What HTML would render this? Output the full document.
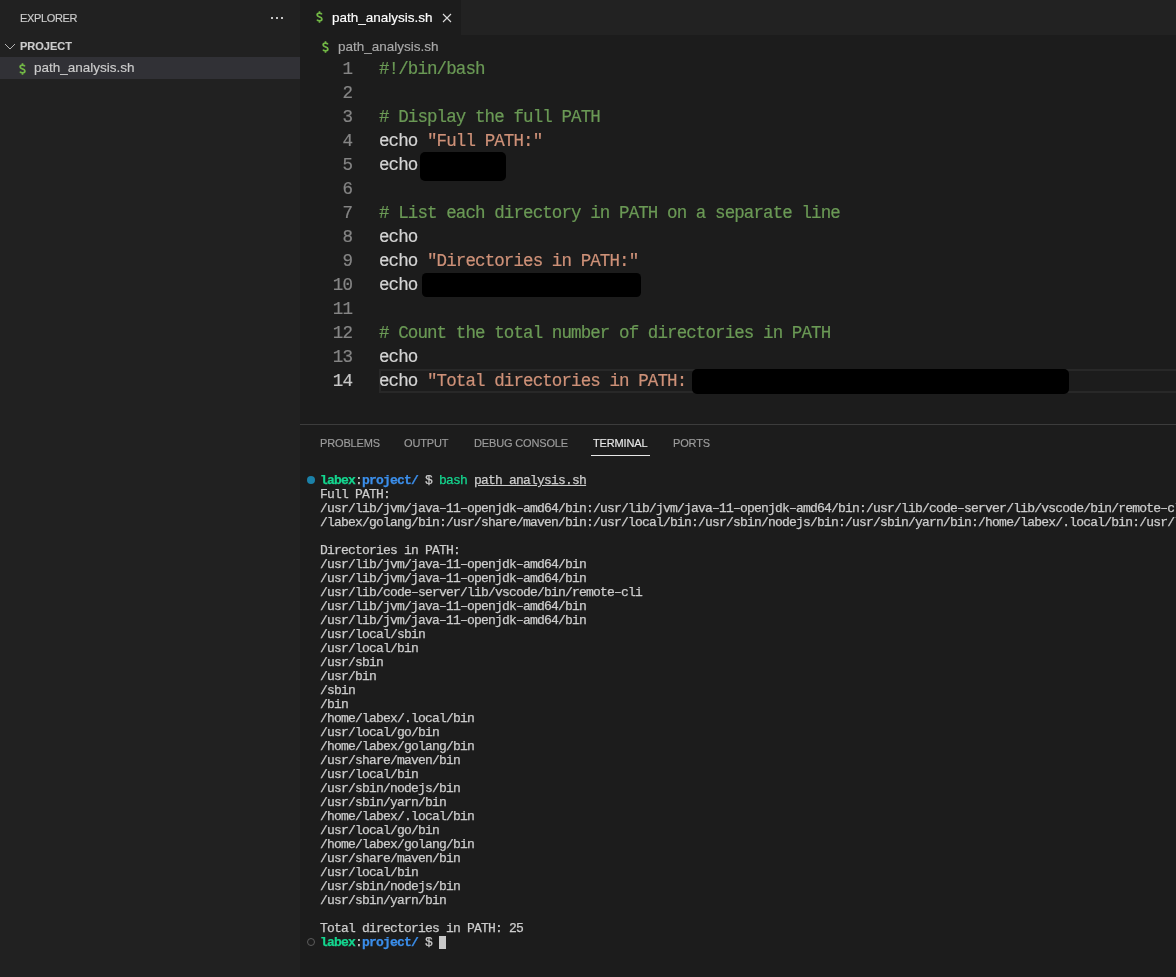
<!DOCTYPE html>
<html><head><meta charset="utf-8">
<style>
*{margin:0;padding:0;box-sizing:border-box}
html,body{width:1176px;height:977px;overflow:hidden;background:#1c1c1c}
body{position:relative;font-family:"Liberation Sans",sans-serif;-webkit-font-smoothing:antialiased;-webkit-text-stroke:0.15px currentColor}
#side,#editor{will-change:transform}
.abs{position:absolute}
#side{left:0;top:0;width:300px;height:977px;background:#212121}
#side .t{position:absolute;white-space:nowrap}
#editor{left:300px;top:0;width:876px;height:977px;background:#1c1c1c;overflow:hidden}
#tabs{left:0;top:0;width:876px;height:35px;background:#222222}
#tab{left:0;top:0;width:161px;height:35px;background:#1c1c1c}
.mono{font-family:"Liberation Mono",monospace}
.code{-webkit-text-stroke:0.2px currentColor;position:absolute;margin-top:-1px;left:79px;font-size:17.5px;letter-spacing:-0.9px;white-space:pre;line-height:24px;color:#d4d4d4}
.ln{-webkit-text-stroke:0.2px currentColor;position:absolute;margin-top:-1px;left:0;width:52px;text-align:right;font-size:17.5px;letter-spacing:-0.9px;line-height:24px;color:#858585}
.cm{color:#6a9955}
.st{color:#ce9178}
.red{position:absolute;background:#000;border-radius:5px}
#panel{left:0;top:424px;width:876px;height:553px;border-top:1px solid #3c3c3c;background:#1c1c1c}
.ptab{position:absolute;top:12px;font-size:11px;letter-spacing:-0.15px;color:#9d9d9d;white-space:nowrap}
.term{-webkit-text-stroke:0.25px currentColor;position:absolute;left:20px;top:49px;font-size:13px;letter-spacing:-0.8px;line-height:14px;color:#cccccc;white-space:pre}
.g{color:#14d68f}
.b{color:#3b8eea}
</style></head><body>
<div id="side" class="abs">
  <div class="t" style="left:20px;top:12px;font-size:11px;letter-spacing:-0.35px;color:#cccccc">EXPLORER</div>
  <div class="abs" style="left:271px;top:17px;width:2px;height:2px;background:#c5c5c5"></div>
  <div class="abs" style="left:276px;top:17px;width:2px;height:2px;background:#c5c5c5"></div>
  <div class="abs" style="left:281px;top:17px;width:2px;height:2px;background:#c5c5c5"></div>
  <svg class="abs" style="left:4px;top:43px" width="12" height="7" viewBox="0 0 12 7"><path d="M1 1 L6 6 L11 1" fill="none" stroke="#b4b4b4" stroke-width="1"/></svg>
  <div class="t" style="left:20px;top:40px;font-size:11px;font-weight:bold;color:#cccccc">PROJECT</div>
  <div class="abs" style="left:0;top:57px;width:300px;height:22px;background:#313136"></div>
  <svg class="abs" style="left:18.6px;top:62.5px" width="7" height="12" viewBox="0 0 7 12"><path d="M3.5 0.2V2.2M3.5 9.8V11.8M5.9 3.4C5.5 2.6 4.6 2.2 3.5 2.2C2.1 2.2 1.1 2.9 1.1 3.9C1.1 5.1 2.3 5.5 3.5 5.9C4.8 6.3 5.9 6.8 5.9 8C5.9 9.2 4.8 9.8 3.5 9.8C2.3 9.8 1.4 9.4 1 8.6" fill="none" stroke="#72b845" stroke-width="1.7"/></svg>
  <div class="t" style="left:34px;top:60px;font-size:13.5px;color:#cccccc">path_analysis.sh</div>
</div>
<div id="editor" class="abs">
  <div id="tabs" class="abs">
    <div id="tab" class="abs">
      <svg class="abs" style="left:16px;top:11px" width="7" height="12" viewBox="0 0 7 12"><path d="M3.5 0.2V2.2M3.5 9.8V11.8M5.9 3.4C5.5 2.6 4.6 2.2 3.5 2.2C2.1 2.2 1.1 2.9 1.1 3.9C1.1 5.1 2.3 5.5 3.5 5.9C4.8 6.3 5.9 6.8 5.9 8C5.9 9.2 4.8 9.8 3.5 9.8C2.3 9.8 1.4 9.4 1 8.6" fill="none" stroke="#72b845" stroke-width="1.7"/></svg>
      <div class="abs" style="left:32px;top:10px;font-size:13.5px;color:#ffffff;white-space:nowrap">path_analysis.sh</div>
      <svg class="abs" style="left:142px;top:13px" width="10" height="10" viewBox="0 0 10 10"><path d="M1 1 L9 9 M9 1 L1 9" stroke="#dcdcdc" stroke-width="1.1"/></svg>
    </div>
  </div>
  <svg class="abs" style="left:22px;top:40.5px" width="7" height="12" viewBox="0 0 7 12"><path d="M3.5 0.2V2.2M3.5 9.8V11.8M5.9 3.4C5.5 2.6 4.6 2.2 3.5 2.2C2.1 2.2 1.1 2.9 1.1 3.9C1.1 5.1 2.3 5.5 3.5 5.9C4.8 6.3 5.9 6.8 5.9 8C5.9 9.2 4.8 9.8 3.5 9.8C2.3 9.8 1.4 9.4 1 8.6" fill="none" stroke="#72b845" stroke-width="1.7"/></svg>
  <div class="abs" style="left:38px;top:39px;font-size:13.5px;color:#a9a9a9;white-space:nowrap">path_analysis.sh</div>

  <div class="abs mono" style="left:0;top:58px;width:876px;height:340px">
    <div class="ln" style="top:0">1</div>
    <div class="ln" style="top:24px">2</div>
    <div class="ln" style="top:48px">3</div>
    <div class="ln" style="top:72px">4</div>
    <div class="ln" style="top:96px">5</div>
    <div class="ln" style="top:120px">6</div>
    <div class="ln" style="top:144px">7</div>
    <div class="ln" style="top:168px">8</div>
    <div class="ln" style="top:192px">9</div>
    <div class="ln" style="top:216px">10</div>
    <div class="ln" style="top:240px">11</div>
    <div class="ln" style="top:264px">12</div>
    <div class="ln" style="top:288px">13</div>
    <div class="ln" style="top:312px;color:#c6c6c6">14</div>
    <div class="abs" style="left:79px;top:311px;width:805px;height:24px;border:2px solid #282828;border-right:none"></div>
    <div class="code" style="top:0"><span class="cm">#!/bin/bash</span></div>
    <div class="code" style="top:48px"><span class="cm"># Display the full PATH</span></div>
    <div class="code" style="top:72px">echo <span class="st">"Full PATH:"</span></div>
    <div class="code" style="top:96px">echo</div>
    <div class="code" style="top:144px"><span class="cm"># List each directory in PATH on a separate line</span></div>
    <div class="code" style="top:168px">echo</div>
    <div class="code" style="top:192px">echo <span class="st">"Directories in PATH:"</span></div>
    <div class="code" style="top:216px">echo</div>
    <div class="code" style="top:264px"><span class="cm"># Count the total number of directories in PATH</span></div>
    <div class="code" style="top:288px">echo</div>
    <div class="code" style="top:312px">echo <span class="st">"Total directories in PATH: </span></div>
    <div class="red" style="left:120.4px;top:94.3px;width:85.4px;height:28.4px"></div>
    <div class="red" style="left:122px;top:215px;width:219px;height:24px;border-radius:4.5px"></div>
    <div class="red" style="left:392px;top:311px;width:377.3px;height:25px"></div>
  </div>

  <div id="panel" class="abs">
    <div class="ptab" style="left:20px">PROBLEMS</div>
    <div class="ptab" style="left:104px">OUTPUT</div>
    <div class="ptab" style="left:174px">DEBUG CONSOLE</div>
    <div class="ptab" style="left:293px;color:#e7e7e7">TERMINAL</div>
    <div class="abs" style="left:291px;top:30px;width:59px;height:1px;background:#e7e7e7"></div>
    <div class="ptab" style="left:373px">PORTS</div>
    <div class="abs" style="left:139px;top:511px;width:7px;height:13px;background:#c8c8c8"></div>
    <div class="abs" style="left:6.8px;top:51px;width:8.4px;height:8.4px;border-radius:50%;background:#1b81a8"></div>
    <div class="abs" style="left:7px;top:513px;width:8px;height:8px;border-radius:50%;border:1.3px solid #5c5c5c"></div>
    <div class="term mono"><span class="g" style="font-weight:bold">labex</span>:<span class="b" style="font-weight:bold">project/</span> $ <span class="g">bash</span> <span style="text-decoration:underline">path_analysis.sh</span>
Full PATH:
/usr/lib/jvm/java&#8211;11&#8211;openjdk&#8211;amd64/bin:/usr/lib/jvm/java&#8211;11&#8211;openjdk&#8211;amd64/bin:/usr/lib/code&#8211;server/lib/vscode/bin/remote&#8211;cli:
/labex/golang/bin:/usr/share/maven/bin:/usr/local/bin:/usr/sbin/nodejs/bin:/usr/sbin/yarn/bin:/home/labex/.local/bin:/usr/loc

Directories in PATH:
/usr/lib/jvm/java&#8211;11&#8211;openjdk&#8211;amd64/bin
/usr/lib/jvm/java&#8211;11&#8211;openjdk&#8211;amd64/bin
/usr/lib/code&#8211;server/lib/vscode/bin/remote&#8211;cli
/usr/lib/jvm/java&#8211;11&#8211;openjdk&#8211;amd64/bin
/usr/lib/jvm/java&#8211;11&#8211;openjdk&#8211;amd64/bin
/usr/local/sbin
/usr/local/bin
/usr/sbin
/usr/bin
/sbin
/bin
/home/labex/.local/bin
/usr/local/go/bin
/home/labex/golang/bin
/usr/share/maven/bin
/usr/local/bin
/usr/sbin/nodejs/bin
/usr/sbin/yarn/bin
/home/labex/.local/bin
/usr/local/go/bin
/home/labex/golang/bin
/usr/share/maven/bin
/usr/local/bin
/usr/sbin/nodejs/bin
/usr/sbin/yarn/bin

Total directories in PATH: 25
<span class="g" style="font-weight:bold">labex</span>:<span class="b" style="font-weight:bold">project/</span> $ </div>
  </div>
</div>
</body></html>
